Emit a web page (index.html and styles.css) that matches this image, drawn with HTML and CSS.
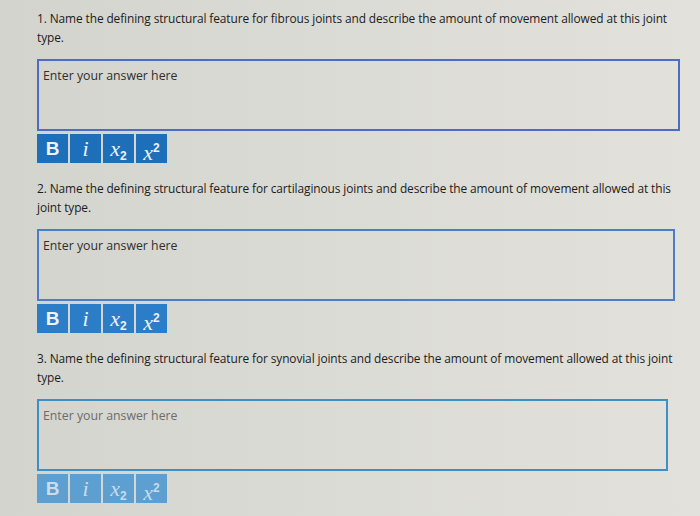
FILE: index.html
```html
<!DOCTYPE html>
<html><head><link rel="stylesheet" href="styles.css"></head>
<body>
<div id="quiz">

<div class="question">
<p class="prompt">1. Name the defining structural feature for fibrous joints and describe the amount of movement allowed at this joint type.</p>
<div class="answer q1" contenteditable="true"><span class="hint">Enter your answer here</span></div>
<div class="toolbar q1">
<button type="button" class="bold">B</button><button type="button" class="ital">i</button><button type="button" class="ital">x<sub>2</sub></button><button type="button" class="ital">x<sup>2</sup></button>
</div>
</div>

<div class="question">
<p class="prompt">2. Name the defining structural feature for cartilaginous joints and describe the amount of movement allowed at this joint type.</p>
<div class="answer q2" contenteditable="true"><span class="hint">Enter your answer here</span></div>
<div class="toolbar q2">
<button type="button" class="bold">B</button><button type="button" class="ital">i</button><button type="button" class="ital">x<sub>2</sub></button><button type="button" class="ital">x<sup>2</sup></button>
</div>
</div>

<div class="question">
<p class="prompt">3. Name the defining structural feature for synovial joints and describe the amount of movement allowed at this joint type.</p>
<div class="answer q3" contenteditable="true"><span class="hint">Enter your answer here</span></div>
<div class="toolbar q3">
<button type="button" class="bold">B</button><button type="button" class="ital">i</button><button type="button" class="ital">x<sub>2</sub></button><button type="button" class="ital">x<sup>2</sup></button>
</div>
</div>

</div>
</body></html>
```

FILE: styles.css
```css
body {margin: 0; background: linear-gradient(90deg, #d3d4ce 0%, #dbdbd5 45%, #e2e1db 100%); font-family: "Open Sans", "Liberation Sans", sans-serif; color: #2a2a2a; height: 516px; overflow: hidden;}
#quiz {padding: 9px 0 0 37px; width: 645px;}
.question {height: 170px;}
.prompt {margin: 0; font-size: 11.9px; line-height: 19px; letter-spacing: -0.1px; color: #1c1c1c; width: 640px;}
.answer {margin-top: 12px; height: 72px; border: 2px solid #4e6cc2; background: transparent; padding: 2px 4px; box-sizing: border-box; width: 643px; outline: none;}
.answer.q2 {border-color: #4b7dc9; width: 638px;}
.answer.q3 {border-color: #3e8fc6; width: 631px;}
.hint {font-size: 12.3px; color: #2e2e2e;}
.answer.q3 .hint {color: #6c6c6c;}
.toolbar {display: flex; gap: 2px; margin-top: 3px;}
.toolbar button {width: 31px; height: 29px; border: 0; padding: 0; background: #1e6fb9; color: #eef2f8; line-height: 29px;}
.toolbar.q2 button {background: #2a7dc6;}
.toolbar.q3 button {background: #5d9fd0; color: #c9dcea;}
.toolbar .bold {font-family: "Liberation Sans", sans-serif; font-weight: bold; font-size: 19px;}
.toolbar .ital {font-family: "Liberation Serif", serif; font-style: italic; font-size: 22px;}
.toolbar sub, .toolbar sup {font-family: "Liberation Sans", sans-serif; font-style: normal; font-weight: bold; font-size: 12px;}
.toolbar sub {vertical-align: -4px;}
.toolbar sup {vertical-align: 8px;}
```
